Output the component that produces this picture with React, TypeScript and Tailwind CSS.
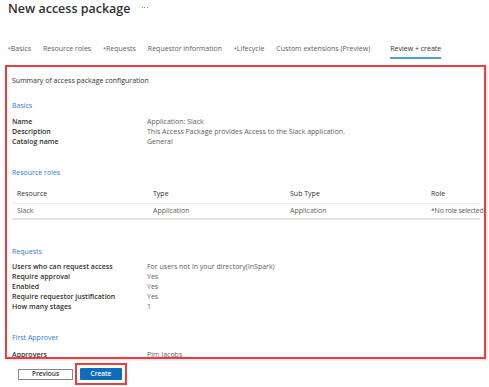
import React from "react";

const tabs = [
  { label: "Basics", req: true },
  { label: "Resource roles", req: false },
  { label: "Requests", req: true },
  { label: "Requestor information", req: false },
  { label: "Lifecycle", req: true },
  { label: "Custom extensions (Preview)", req: false },
];

function Row({ label, value }: { label: string; value: string }) {
  return (
    <div className="grid grid-cols-[135px_1fr] h-[10px] items-center leading-[10px]">
      <span className="font-semibold text-[#323130]">{label}</span>
      <span className="text-[#605e5c]">{value}</span>
    </div>
  );
}

function SectionTitle({ children }: { children: React.ReactNode }) {
  return <p className="text-[#2f7bd6] leading-[10px] h-[10px]">{children}</p>;
}

export default function App() {
  return (
    <div className="w-[489px] h-[387px] bg-white overflow-hidden text-[7px] text-[#323130] font-['Open_Sans',sans-serif]">
      {/* Header */}
      <div className="flex items-center gap-[11px] pl-[8px] h-[18px]">
        <h1 className="text-[12.5px] font-semibold text-[#323130] leading-[18px]">New access package</h1>
        <span className="flex gap-[1.5px] mb-[3px]">
          <span className="w-[1px] h-[1px] bg-[#8a8886]" />
          <span className="w-[1px] h-[1px] bg-[#8a8886]" />
          <span className="w-[1px] h-[1px] bg-[#8a8886]" />
        </span>
      </div>

      {/* Tabs */}
      <div className="flex items-end pl-[8px] mt-[26px] h-[15px] gap-[12px] text-[#605e5c]">
        {tabs.map((t) => (
          <span key={t.label} className="h-[15px] leading-[10px]">
            {t.req && <span className="text-[#a4262c] text-[5px] align-top">*</span>}
            {t.label}
          </span>
        ))}
        <span className="ml-[8px] h-[15px] leading-[10px] text-[#323130] border-b-2 border-[#4a9ee8]">Review + create</span>
      </div>

      {/* Summary box */}
      <div className="ml-[5px] mt-[6px] w-[481px] h-[294px] border-2 border-[#f03c3c] shadow-[1px_1px_2px_rgba(0,0,0,0.15)] overflow-hidden pl-[5px]">
        <p className="mt-[9px] h-[10px] leading-[10px]">Summary of access package configuration</p>

        <div className="mt-[15px]">
          <SectionTitle>Basics</SectionTitle>
        </div>
        <div className="mt-[6px]">
          <Row label="Name" value="Application: Slack" />
          <Row label="Description" value="This Access Package provides Access to the Slack application." />
          <Row label="Catalog name" value="General" />
        </div>

        <div className="mt-[21px]">
          <SectionTitle>Resource roles</SectionTitle>
        </div>
        <div className="mt-[8px] mr-[4px] text-[#323130]">
          <div className="grid grid-cols-[136px_137px_141px_1fr] pl-[5px] h-[18px] items-center border-b border-[#edebe9]">
            <span>Resource</span>
            <span>Type</span>
            <span>Sub Type</span>
            <span>Role</span>
          </div>
          <div className="grid grid-cols-[136px_137px_141px_1fr] pl-[5px] h-[16px] items-center border-b-2 border-[#e8e6e4] text-[#605e5c]">
            <span>Slack</span>
            <span>Application</span>
            <span>Application</span>
            <span className="whitespace-nowrap tracking-[-0.25px]">*No role selected</span>
          </div>
        </div>

        <div className="mt-[27px]">
          <SectionTitle>Requests</SectionTitle>
        </div>
        <div className="mt-[5px]">
          <Row label="Users who can request access" value="For users not in your directory(InSpark)" />
          <Row label="Require approval" value="Yes" />
          <Row label="Enabled" value="Yes" />
          <Row label="Require requestor justification" value="Yes" />
          <Row label="How many stages" value="1" />
        </div>

        <div className="mt-[21px]">
          <SectionTitle>First Approver</SectionTitle>
        </div>
        <div className="mt-[7px]">
          <Row label="Approvers" value="Pim Jacobs" />
        </div>
      </div>

      {/* Footer buttons */}
      <div className="flex items-center pl-[18px] mt-[4px] gap-[2px]">
        <button className="w-[55px] h-[11px] border border-[#8a8886] bg-white text-[#323130] text-[6.5px] leading-none font-semibold">
          Previous
        </button>
        <div className="border-2 border-[#f03c3c] px-[3px] py-[3px]">
          <button className="w-[42px] h-[12px] bg-[#0f6cbd] text-white text-[6.5px] leading-none font-semibold rounded-[1px] block">
            Create
          </button>
        </div>
      </div>
    </div>
  );
}
